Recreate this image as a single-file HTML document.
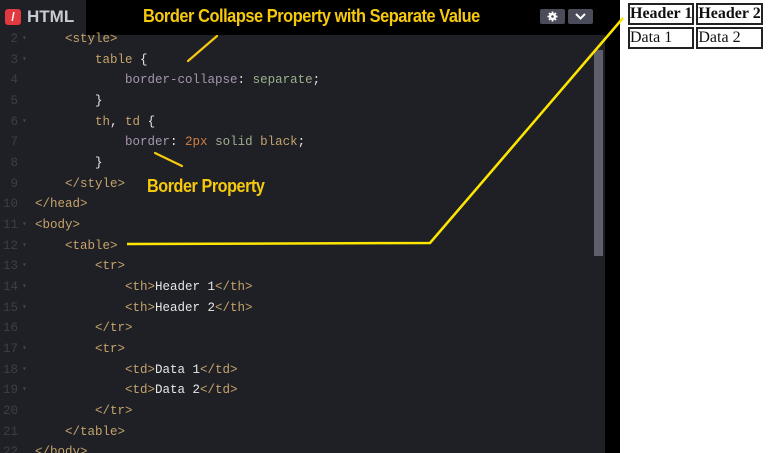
<!DOCTYPE html>
<html><head><meta charset="utf-8"><style>
*{margin:0;padding:0;box-sizing:border-box}
body{width:768px;height:453px;overflow:hidden;background:#fff;position:relative;font-family:"Liberation Mono",monospace}
#ed{position:absolute;left:0;top:0;width:605px;height:453px;background:#1f2026}
#hdr{position:absolute;left:0;top:0;width:605px;height:35px;background:#000}
#tab{position:absolute;left:0;top:0;width:86px;height:35px;background:#1f2026}
#logo{position:absolute;left:5px;top:9px;width:16px;height:16px;background:#e2383f;border-radius:3px;color:#fff;font:bold 12px "Liberation Sans",sans-serif;text-align:center;line-height:16px}
#tabt{position:absolute;left:27px;top:7px;color:#c8cad3;font:bold 17px "Liberation Sans",sans-serif}
.btn{position:absolute;top:9px;width:25px;height:15px;background:#4a4c5a;border-radius:2px}
#strip{position:absolute;left:605px;top:0;width:15px;height:453px;background:#000}
#sb{position:absolute;left:594px;top:50px;width:9px;height:206px;background:#5d606c}
#code{position:absolute;left:0;top:0;width:590px;height:453px;overflow:hidden}
.ln{position:absolute;left:0;width:590px;height:20px;font-size:12.5px;line-height:20px;white-space:pre;color:#e6e6e6}
.n{position:absolute;left:0;width:18px;text-align:right;color:#3c3e48}
.a{position:absolute;left:22px;color:#444650;font-size:8px}
.c{position:absolute;left:35px}
.t{color:#c5a36a}.p{color:#a596ad}.v{color:#9db08b}.o{color:#d08040}
.ann{position:absolute;color:#f6c90e;font:bold 18px "Liberation Sans",sans-serif;letter-spacing:-0.5px;transform:scaleX(0.91);transform-origin:left;white-space:nowrap}
table{position:absolute;left:626px;top:1px;border-collapse:separate;border-spacing:2px;font-family:"Liberation Serif",serif;font-size:16px;color:#111;white-space:nowrap}
th,td{border:2px solid #222;padding:0;text-align:left;height:22px;line-height:18px;width:64px}
</style></head><body>
<div id="ed">
<div id="hdr"></div>
<div id="tab"><div id="logo">/</div><div id="tabt">HTML</div></div>
<div class="btn" style="left:540px"><svg width="25" height="15"><g stroke="#fff" stroke-width="1.8"><line x1="12.5" y1="2.5" x2="12.5" y2="12.5"/><line x1="7.5" y1="7.5" x2="17.5" y2="7.5"/><line x1="9" y1="4" x2="16" y2="11"/><line x1="16" y1="4" x2="9" y2="11"/></g><circle cx="12.5" cy="7.5" r="3.6" fill="#fff"/><circle cx="12.5" cy="7.5" r="1.3" fill="#4a4c5a"/></svg></div>
<div class="btn" style="left:568px"><svg width="25" height="15"><path d="M8 5 L12.5 9.5 L17 5" stroke="#fff" stroke-width="2" fill="none"/></svg></div>
<div id="sb"></div>
</div>
<div id="strip"></div>

<div id="code">
<div class="ln" style="top:29px"><span class="n">2</span><span class="a">▾</span><span class="c">    <span class="t">&lt;style&gt;</span></span></div>
<div class="ln" style="top:50px"><span class="n">3</span><span class="a">▾</span><span class="c">        <span class="t">table</span> {</span></div>
<div class="ln" style="top:70px"><span class="n">4</span><span class="c">            <span class="p">border-collapse</span>: <span class="v">separate</span>;</span></div>
<div class="ln" style="top:91px"><span class="n">5</span><span class="c">        }</span></div>
<div class="ln" style="top:112px"><span class="n">6</span><span class="a">▾</span><span class="c">        <span class="t">th</span>, <span class="t">td</span> {</span></div>
<div class="ln" style="top:132px"><span class="n">7</span><span class="c">            <span class="p">border</span>: <span class="o">2px</span> <span class="v">solid</span> <span class="t">black</span>;</span></div>
<div class="ln" style="top:153px"><span class="n">8</span><span class="c">        }</span></div>
<div class="ln" style="top:174px"><span class="n">9</span><span class="c">    <span class="t">&lt;/style&gt;</span></span></div>
<div class="ln" style="top:194px"><span class="n">10</span><span class="c"><span class="t">&lt;/head&gt;</span></span></div>
<div class="ln" style="top:215px"><span class="n">11</span><span class="a">▾</span><span class="c"><span class="t">&lt;body&gt;</span></span></div>
<div class="ln" style="top:236px"><span class="n">12</span><span class="a">▾</span><span class="c">    <span class="t">&lt;table&gt;</span></span></div>
<div class="ln" style="top:256px"><span class="n">13</span><span class="a">▾</span><span class="c">        <span class="t">&lt;tr&gt;</span></span></div>
<div class="ln" style="top:277px"><span class="n">14</span><span class="a">▾</span><span class="c">            <span class="t">&lt;th&gt;</span>Header 1<span class="t">&lt;/th&gt;</span></span></div>
<div class="ln" style="top:298px"><span class="n">15</span><span class="a">▾</span><span class="c">            <span class="t">&lt;th&gt;</span>Header 2<span class="t">&lt;/th&gt;</span></span></div>
<div class="ln" style="top:318px"><span class="n">16</span><span class="c">        <span class="t">&lt;/tr&gt;</span></span></div>
<div class="ln" style="top:339px"><span class="n">17</span><span class="a">▾</span><span class="c">        <span class="t">&lt;tr&gt;</span></span></div>
<div class="ln" style="top:360px"><span class="n">18</span><span class="a">▾</span><span class="c">            <span class="t">&lt;td&gt;</span>Data 1<span class="t">&lt;/td&gt;</span></span></div>
<div class="ln" style="top:380px"><span class="n">19</span><span class="a">▾</span><span class="c">            <span class="t">&lt;td&gt;</span>Data 2<span class="t">&lt;/td&gt;</span></span></div>
<div class="ln" style="top:401px"><span class="n">20</span><span class="c">        <span class="t">&lt;/tr&gt;</span></span></div>
<div class="ln" style="top:422px"><span class="n">21</span><span class="c">    <span class="t">&lt;/table&gt;</span></span></div>
<div class="ln" style="top:442px"><span class="n">22</span><span class="c"><span class="t">&lt;/body&gt;</span></span></div>
</div>

<div class="ann" style="left:143px;top:6px">Border Collapse Property with Separate Value</div>
<div class="ann" style="left:147px;top:176px;transform:scaleX(0.9)">Border Property</div>

<table><tr><th>Header 1</th><th>Header 2</th></tr><tr><td>Data 1</td><td>Data 2</td></tr></table>

<svg style="position:absolute;left:0;top:0" width="768" height="453">
<g stroke="#f6c90e" stroke-width="2.2" stroke-linecap="round" fill="none">
<line x1="188" y1="61" x2="217" y2="36"/>
<line x1="155" y1="153" x2="182" y2="166"/>
</g>
<polyline points="127,244 430,243 623,18" stroke="#ffe600" stroke-width="2.5" fill="none"/>
</svg>
</body></html>
